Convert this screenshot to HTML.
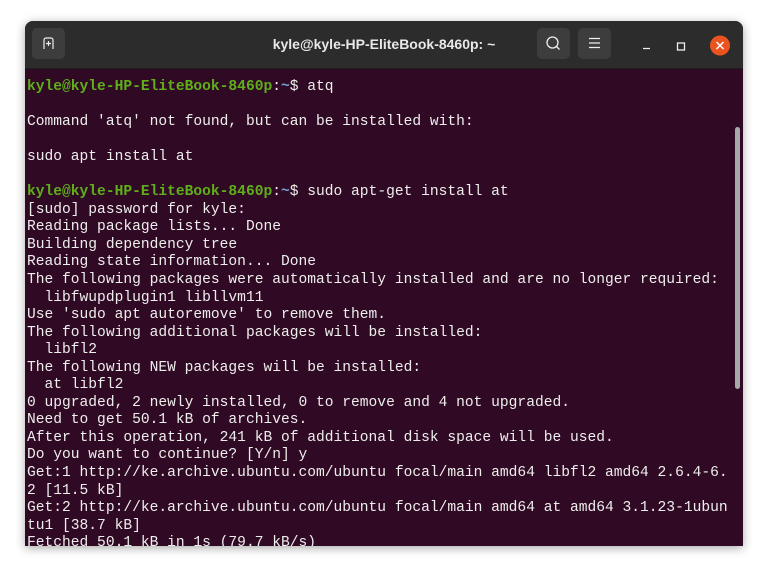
<!DOCTYPE html>
<html><head><style>
body{margin:0;width:768px;height:574px;background:#fff;overflow:hidden;position:relative;font-family:"Liberation Sans",sans-serif}
.win{position:absolute;left:25px;top:21px;width:718px;height:525px;border-radius:8px 8px 0 0;overflow:hidden;box-shadow:0 2px 10px rgba(0,0,0,.35);background:#300a24}
.tb{position:absolute;left:0;top:0;width:100%;height:47px;background:#2c2c2c;border-bottom:1px solid #1e1e1e}
.btn{position:absolute;top:7px;width:33px;height:31px;border-radius:5px;background:#3d3d3d}
.title{position:absolute;left:0;right:0;top:15px;text-align:center;color:#e8e8e8;font-weight:bold;font-size:14px}
pre{position:absolute;left:2px;top:58px;margin:0;font-family:"Liberation Mono",monospace;font-size:14.6px;line-height:17.55px;color:#eeeeec}
.g{color:#5fae1a;font-weight:bold}.b{color:#729fcf;font-weight:bold}
.sb{position:absolute;left:710px;top:106px;width:5px;height:262px;background:#a8a8a8;border-radius:3px}
</style></head><body>
<div class="win">
<div class="tb">
<div class="btn" style="left:7px"><svg width="33" height="31"><path d="M12 21V12a2 2 0 0 1 2-2h5a2 2 0 0 1 2 2v9M14 15.5h5M16.5 13v5" stroke="#eee" stroke-width="1.2" fill="none"/></svg></div>
<div class="title">kyle@kyle-HP-EliteBook-8460p: ~</div>
<div class="btn" style="left:512px"><svg width="33" height="31"><circle cx="15.5" cy="14.5" r="5.5" stroke="#eee" stroke-width="1.3" fill="none"/><path d="M19.5 18.5l3 3" stroke="#eee" stroke-width="1.3"/></svg></div>
<div class="btn" style="left:553px"><svg width="33" height="31"><path d="M11 10.5h11M11 15h11M11 19.5h11" stroke="#eee" stroke-width="1.2"/></svg></div>
<svg style="position:absolute;left:600px;top:10px" width="118" height="30"><path d="M18 17.5h7" stroke="#eee" stroke-width="1.3"/><rect x="52.5" y="12" width="7" height="7" stroke="#eee" stroke-width="1.3" fill="none"/><circle cx="95" cy="14.5" r="10" fill="#e95420"/><path d="M91.5 11l7 7M98.5 11l-7 7" stroke="#fff" stroke-width="1.5"/></svg>
</div>
<pre><span class="g">kyle@kyle-HP-EliteBook-8460p</span>:<span class="b">~</span>$ atq

Command 'atq' not found, but can be installed with:

sudo apt install at

<span class="g">kyle@kyle-HP-EliteBook-8460p</span>:<span class="b">~</span>$ sudo apt-get install at
[sudo] password for kyle: 
Reading package lists... Done
Building dependency tree       
Reading state information... Done
The following packages were automatically installed and are no longer required:
  libfwupdplugin1 libllvm11
Use 'sudo apt autoremove' to remove them.
The following additional packages will be installed:
  libfl2
The following NEW packages will be installed:
  at libfl2
0 upgraded, 2 newly installed, 0 to remove and 4 not upgraded.
Need to get 50.1 kB of archives.
After this operation, 241 kB of additional disk space will be used.
Do you want to continue? [Y/n] y
Get:1 http://ke.archive.ubuntu.com/ubuntu focal/main amd64 libfl2 amd64 2.6.4-6.
2 [11.5 kB]
Get:2 http://ke.archive.ubuntu.com/ubuntu focal/main amd64 at amd64 3.1.23-1ubun
tu1 [38.7 kB]
Fetched 50.1 kB in 1s (79.7 kB/s)</pre>
<div class="sb"></div>
</div>
</body></html>
